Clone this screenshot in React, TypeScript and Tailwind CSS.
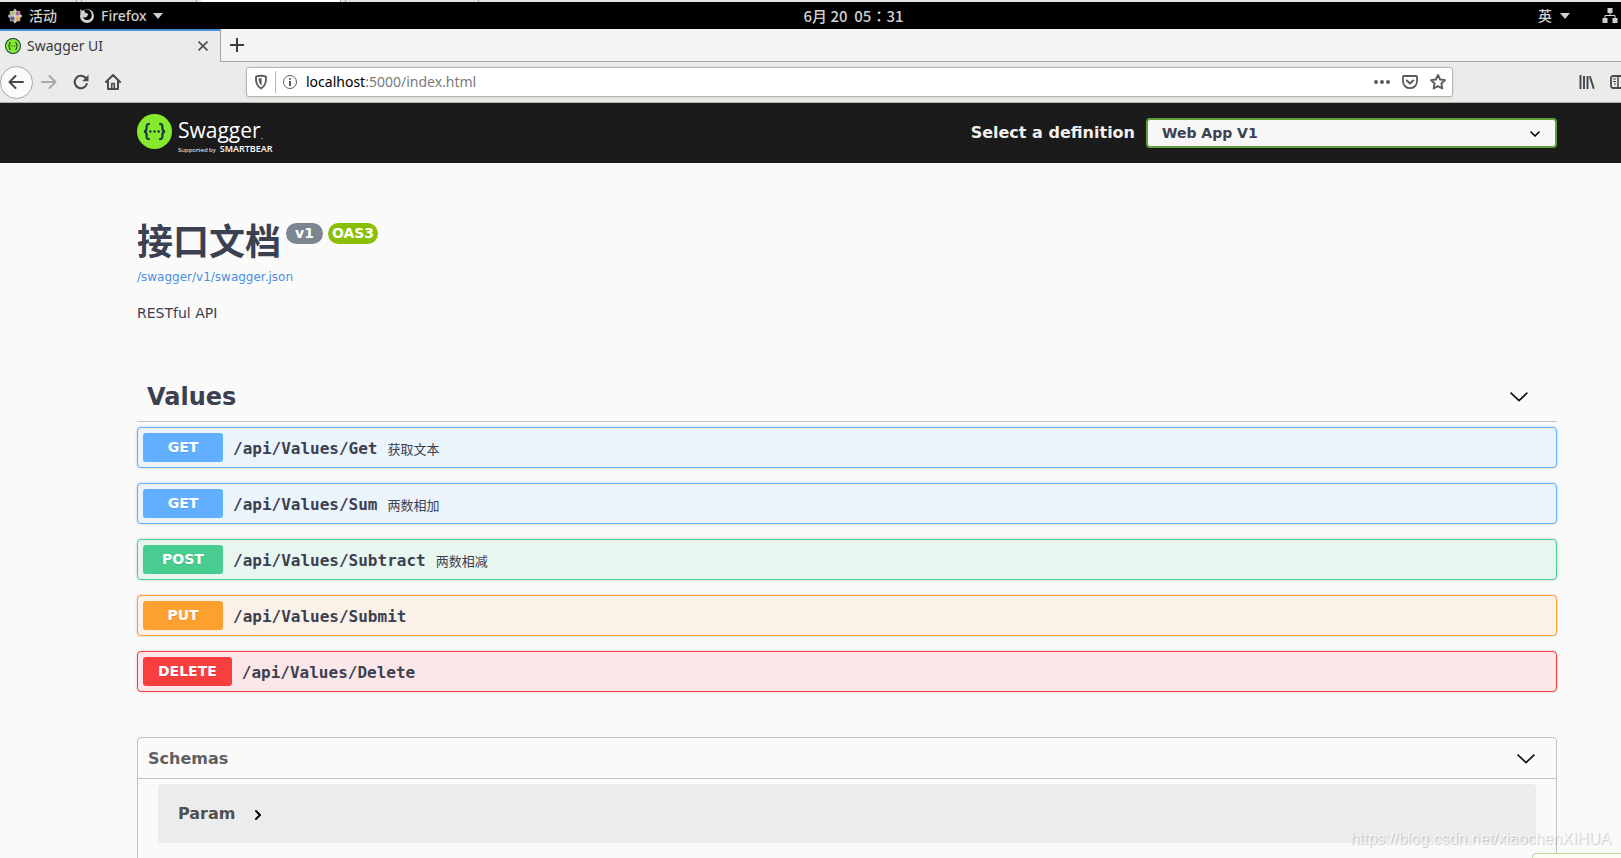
import { useId } from 'react'
import { ChevronDown, ChevronRight } from 'lucide-react'

// Linux desktop with a Firefox window that shows the Swagger UI of a web API.

type Method = 'GET' | 'POST' | 'PUT' | 'DELETE'

interface Operation {
  method: Method
  path: string
  summary?: string
}

const OPERATIONS: Operation[] = [
  { method: 'GET', path: '/api/Values/Get', summary: '获取文本' },
  { method: 'GET', path: '/api/Values/Sum', summary: '两数相加' },
  { method: 'POST', path: '/api/Values/Subtract', summary: '两数相减' },
  { method: 'PUT', path: '/api/Values/Submit' },
  { method: 'DELETE', path: '/api/Values/Delete' },
]

const BLOCK_CLASSES: Record<Method, string> = {
  GET: 'border-[#61affe] bg-[#ebf3fb]',
  POST: 'border-[#49cc90] bg-[#e8f6f0]',
  PUT: 'border-[#fca130] bg-[#fbf1e6]',
  DELETE: 'border-[#f93e3e] bg-[#fbe7e7]',
}

const BADGE_CLASSES: Record<Method, string> = {
  GET: 'bg-[#61affe]',
  POST: 'bg-[#49cc90]',
  PUT: 'bg-[#fca130]',
  DELETE: 'bg-[#f93e3e]',
}

const UI_FONT = "font-['Noto_Sans','Noto_Sans_CJK_SC',sans-serif]"

function ActivitiesIcon() {
  return (
    <svg viewBox="0 0 16 16" className="size-4" aria-hidden="true">
      <path d="M8 .5l2.200 2.500h3v3L15.500 8l-2.300 2.200v3h-3L8 15.500l-2.200-2.300h-3v-3L.5 8l2.300-2V3h3z" fill="#bdb6bd" />
      <path d="M3.500 3.500h4v4h-4z" fill="#a9c66a" />
      <path d="M8.500 3.500h4v4h-4z" fill="#a8629a" />
      <path d="M3.500 8.500h4v4h-4z" fill="#5a5a9c" />
      <path d="M8.500 8.500h4v4h-4z" fill="#e8b04a" />
      <path d="M8 1.500L6.500 4h3zM14.500 8L12 6.500v3zM8 14.500L6.500 12h3z" fill="#d9b45c" />
      <path d="M1.500 8L4 6.500v3z" fill="#7a6fae" />
      <path d="M8 2v12M2 8h12" stroke="#e6e2e6" strokeWidth=".8" />
    </svg>
  )
}

function FirefoxIcon() {
  return (
    <svg viewBox="0 0 16 16" className="size-4" aria-hidden="true">
      <circle cx="8" cy="8" r="7" fill="#d0d0d0" />
      <path d="M5 1.500C8 .8 11 2 12 4.500c1.600 3 .4 7-3.200 7.600-2.400.3-4.400-1-4.800-3 .9.600 2 .7 2.800.1L8.500 8 6.800 7.600l1.400-2-2-.5z" fill="#000" />
      <path d="M1.200 1l2.600 2.400L1.500 6z" fill="#d0d0d0" />
      <path d="M6.500 4.500l3 1.700-1.800 2.300-2.500-.8z" fill="#d0d0d0" />
    </svg>
  )
}

function NetworkIcon() {
  return (
    <svg viewBox="0 0 16 16" className="size-4 shrink-0" aria-hidden="true">
      <path d="M5.500 0h5v5h-5zM.5 10h5v5h-5zM10.500 10h5v5h-5z" fill="#d0d0d0" />
      <path d="M8 5v2.500M3 10V7.500h10V10" fill="none" stroke="#d0d0d0" />
    </svg>
  )
}

function SwaggerMark({ className, outlined }: { className: string; outlined?: boolean }) {
  return (
    <svg viewBox="0 0 35 35" className={className} aria-hidden="true">
      <circle cx="17.500" cy="17.500" r="17.500" fill={outlined ? '#173647' : '#85ea2d'} />
      {outlined && <circle cx="17.500" cy="17.500" r="15.500" fill="#85ea2d" />}
      <path
        d="M12.800 9.800c-2.600 0-3.200.7-3.200 2.700v1.700c0 1.900-.6 3.100-2.600 3.300 2 .2 2.600 1.400 2.600 3.300v1.700c0 2 .6 2.700 3.200 2.700M22.200 9.800c2.600 0 3.200.7 3.200 2.700v1.700c0 1.900.6 3.100 2.600 3.300-2 .2-2.600 1.400-2.600 3.300v1.700c0 2-.6 2.700-3.200 2.700"
        fill="none"
        stroke="#173647"
        strokeWidth="2.200"
      />
      <circle cx="13.300" cy="17.500" r="1.300" fill="#173647" />
      <circle cx="17.500" cy="17.500" r="1.300" fill="#173647" />
      <circle cx="21.700" cy="17.500" r="1.300" fill="#173647" />
    </svg>
  )
}

function BackIcon() {
  return (
    <svg viewBox="0 0 16 16" className="size-4" fill="none" stroke="currentColor" strokeWidth="2" strokeLinecap="round" strokeLinejoin="round" aria-hidden="true">
      <path d="M15 8H1.500M7.500 2l-6 6 6 6" />
    </svg>
  )
}

function ForwardIcon() {
  return (
    <svg viewBox="0 0 16 16" className="size-4" fill="none" stroke="currentColor" strokeWidth="2" strokeLinecap="round" strokeLinejoin="round" aria-hidden="true">
      <path d="M1 8h13.500M8.500 2l6 6-6 6" />
    </svg>
  )
}

function ReloadIcon() {
  return (
    <svg viewBox="0 0 16 16" className="size-4" aria-hidden="true">
      <path d="M13.800 10A6.200 6.200 0 1 1 12.300 3.600" fill="none" stroke="currentColor" strokeWidth="2.100" strokeLinecap="round" />
      <path d="M15.500.8v6.400H9.100z" fill="currentColor" />
    </svg>
  )
}

function HomeIcon() {
  return (
    <svg viewBox="0 0 16 16" className="size-4" fill="none" stroke="currentColor" strokeWidth="2" strokeLinecap="round" strokeLinejoin="round" aria-hidden="true">
      <path d="M1 8l7-7 7 7M3 7.500V15h10V7.500" />
      <path d="M6.700 15V9.500h2.600V15" strokeWidth="1.600" />
    </svg>
  )
}

function ShieldIcon() {
  return (
    <svg viewBox="0 0 16 16" className="size-4" aria-hidden="true">
      <path d="M8 1.800c2 0 3.600.3 5 .8.300 4.600-.6 9.500-5 11.900-4.400-2.400-5.300-7.300-5-11.900 1.400-.5 3-.8 5-.8z" fill="none" stroke="currentColor" strokeWidth="1.900" strokeLinejoin="round" />
      <path d="M8.600 4.300v7.400C6.200 9.800 5.500 7.300 5.500 4.600c1-.2 2-.3 3.100-.3z" fill="currentColor" />
    </svg>
  )
}

function InfoIcon() {
  return (
    <svg viewBox="0 0 16 16" className="size-4" aria-hidden="true">
      <circle cx="8" cy="8" r="6.500" fill="none" stroke="currentColor" />
      <circle cx="8" cy="5" r="1.100" fill="currentColor" />
      <path d="M7 7h2v5H7z" fill="currentColor" />
    </svg>
  )
}

function DotsIcon() {
  return (
    <svg viewBox="0 0 16 16" className="size-4" fill="currentColor" aria-hidden="true">
      <circle cx="2" cy="8" r="2" />
      <circle cx="8" cy="8" r="2" />
      <circle cx="14" cy="8" r="2" />
    </svg>
  )
}

function PocketIcon() {
  return (
    <svg viewBox="0 0 16 16" className="size-4" fill="none" stroke="currentColor" strokeWidth="2" strokeLinecap="round" strokeLinejoin="round" aria-hidden="true">
      <path d="M1.800 2h12.400c.5 0 .8.300.8.800V7.500a7 6.700 0 0 1-14 0V2.800c0-.5.300-.8.800-.8z" strokeWidth="1.800" />
      <path d="M4.800 6.500L8 9.500l3.200-3" />
    </svg>
  )
}

function StarIcon() {
  return (
    <svg viewBox="0 0 16 16" className="size-4" fill="none" stroke="currentColor" strokeWidth="1.900" strokeLinejoin="round" aria-hidden="true">
      <path d="M8 1l2.100 4.500 4.900.6-3.600 3.400.9 5L8 12.100l-4.300 2.400.9-5L1 6.100l4.900-.6z" />
    </svg>
  )
}

function LibraryIcon() {
  return (
    <svg viewBox="0 0 16 16" className="size-4" fill="none" stroke="currentColor" strokeWidth="2" aria-hidden="true">
      <path d="M1.500 1v14M5 2v13M8.500 2v13M10.800 2.200l4 12.500" />
    </svg>
  )
}

function SidebarIcon() {
  return (
    <svg viewBox="0 0 16 16" className="size-4 shrink-0" fill="none" stroke="currentColor" aria-hidden="true">
      <rect x="1" y="2" width="14" height="12" rx="2" strokeWidth="1.800" />
      <path d="M8 2v12" strokeWidth="1.500" />
      <path d="M3 5h3M3 7.500h3M4 10h2" />
    </svg>
  )
}

function Caret() {
  return (
    <svg viewBox="0 0 10 6" className="h-[6px] w-[10px]" aria-hidden="true">
      <path d="M0 0h10L5 6z" fill="#d0d0d0" />
    </svg>
  )
}

function WideChevron() {
  return (
    <svg viewBox="0 0 18 10" className="h-[10px] w-[18px]" fill="none" stroke="#111" strokeWidth="1.700" aria-hidden="true">
      <path d="M.6.700L9 8.600 17.400.700" />
    </svg>
  )
}

function DesktopBar() {
  return (
    <header className={`grid h-[27px] shrink-0 grid-cols-[1fr_auto_1fr] items-center bg-black text-sm font-medium text-[#d0d0d0] ${UI_FONT}`}>
      <div className="flex items-center pl-[7px]">
        <button className="flex items-center gap-1.5">
          <ActivitiesIcon />
          <span>活动</span>
        </button>
        <button className="ml-[22px] flex items-center gap-1.5">
          <FirefoxIcon />
          <span>Firefox</span>
          <Caret />
        </button>
      </div>
      <time className="pl-[86px] font-['Noto_Sans_CJK_JP',sans-serif] text-[15px] leading-6 font-medium whitespace-pre">
        6月 20  05：31
      </time>
      <div className="flex items-center justify-end pr-[3px]">
        <button className="mr-8 flex items-center gap-2">
          <span>英</span>
          <Caret />
        </button>
        <NetworkIcon />
      </div>
    </header>
  )
}

function TabStrip() {
  return (
    <div className={`flex h-[33px] shrink-0 bg-[#f4f4f4] text-sm text-[#38383d] ${UI_FONT}`}>
      <div className="flex w-[221px] items-center gap-1.5 border-t-2 border-r border-t-[#4a90d9] border-r-[#a6a6a6] bg-[#ebebea] pr-3 pb-0.5 pl-[5px]">
        <SwaggerMark className="size-4" outlined />
        <span className="flex-1">Swagger UI</span>
        <button aria-label="Close tab">
          <svg viewBox="0 0 10 10" className="size-[10px]" fill="none" stroke="#4a4f52" strokeWidth="1.600" aria-hidden="true">
            <path d="M.5.500l9 9M9.500.500l-9 9" />
          </svg>
        </button>
      </div>
      <div className="flex flex-1 items-center border-b border-[#a6a6a6] pl-[9px]">
        <button aria-label="New tab">
          <svg viewBox="0 0 14 14" className="size-[14px]" fill="none" stroke="#3a3f42" strokeWidth="2" aria-hidden="true">
            <path d="M7 0v14M0 7h14" />
          </svg>
        </button>
      </div>
    </div>
  )
}

function NavToolbar() {
  return (
    <div className={`flex h-[41px] shrink-0 items-center overflow-hidden border-b border-[#b0b0ab] bg-[#ebebea] text-[#454b4e] ${UI_FONT}`}>
      <button aria-label="Back" className="flex size-[33px] shrink-0 items-center justify-center rounded-full border border-[#a6a6a6] bg-[#fbfbfb] pr-0.5">
        <BackIcon />
      </button>
      <div className="flex items-center gap-4 pl-2">
        <button aria-label="Forward" className="text-[#a6a8a9]">
          <ForwardIcon />
        </button>
        <button aria-label="Reload">
          <ReloadIcon />
        </button>
        <button aria-label="Home">
          <HomeIcon />
        </button>
      </div>
      <div className="ml-[125px] flex h-[30px] flex-1 items-center rounded-[3px] border border-[#b5b5b0] bg-white pr-1.5 pl-1.5 text-[#5c5c5c] shadow-[0_1px_3px_rgba(0,0,0,0.1)]">
        <ShieldIcon />
        <span className="ml-1.5 h-[22px] w-px bg-[#b8b8b8]" />
        <span className="ml-1.5">
          <InfoIcon />
        </span>
        <a href="#top" className="ml-2 flex-1 text-sm text-[#7a7a7a]">
          <span className="text-black">localhost</span>:5000/index.html
        </a>
        <div className="flex items-center gap-3">
          <button aria-label="Page actions">
            <DotsIcon />
          </button>
          <button aria-label="Save to Pocket">
            <PocketIcon />
          </button>
          <button aria-label="Bookmark this page">
            <StarIcon />
          </button>
        </div>
      </div>
      <div className="flex w-[168px] items-center justify-end gap-[15px]">
        <button aria-label="Library">
          <LibraryIcon />
        </button>
        <button aria-label="Sidebars" className="w-[11px] overflow-hidden">
          <SidebarIcon />
        </button>
      </div>
    </div>
  )
}

function TopBar() {
  const selectId = useId()
  return (
    <div className="flex h-[60px] shrink-0 items-center bg-[#1b1b1b] pr-16 pl-[137px]">
      <a href="#top" aria-label="Swagger" className="flex items-start gap-1.5 font-['Open_Sans',sans-serif] text-white">
        <SwaggerMark className="mt-0.5 size-[35px]" />
        <span className="flex flex-col pt-1">
          <span className="flex items-end text-[21px] leading-7">
            Swagger<span className="text-[8px] leading-4">.</span>
          </span>
          <span className="flex items-baseline gap-1 text-[6px] leading-[10px]">
            Supported by <b className="text-[9px] font-semibold">SMARTBEAR</b>
          </span>
        </span>
      </a>
      <label htmlFor={selectId} className="ml-auto pr-px font-bold text-[#f0f0f0]">
        Select a definition
      </label>
      <div className="relative ml-[10px] w-[411px]">
        <select
          id={selectId}
          className="block h-[30px] w-full appearance-none rounded-sm border-2 border-[#62a03f] bg-[#f7f7f7] pl-3.5 text-sm font-bold text-[#3b4151]"
        >
          <option>Web App V1</option>
        </select>
        <ChevronDown className="pointer-events-none absolute top-2 right-[14px] size-4 text-black" strokeWidth={2.5} aria-hidden="true" />
      </div>
    </div>
  )
}

function OperationRow({ op }: { op: Operation }) {
  return (
    <li>
      <button
        className={`flex w-full items-center rounded border p-[5px] text-left shadow-[0_0_3px_rgba(0,0,0,0.19)] ${BLOCK_CLASSES[op.method]}`}
      >
        <span
          className={`h-[29px] min-w-20 rounded-[3px] px-[15px] text-center text-sm leading-7 font-bold text-white [text-shadow:0_1px_0_rgba(0,0,0,0.1)] ${BADGE_CLASSES[op.method]}`}
        >
          {op.method}
        </span>
        <span className="px-[10px] pt-0.5 font-['DejaVu_Sans_Mono',monospace] text-base font-bold">{op.path}</span>
        {op.summary && (
          <span className="pt-0.5 font-['Noto_Sans_CJK_SC',sans-serif] text-[13px] leading-5">{op.summary}</span>
        )}
      </button>
    </li>
  )
}

function ApiInfo() {
  return (
    <section>
      <div className="flex items-start gap-[5px]">
        <h1 className="font-['Noto_Sans_CJK_SC',sans-serif] text-4xl leading-8 font-bold">接口文档</h1>
        <span className="rounded-full bg-[#7d8492] px-[9px] text-sm leading-[21px] font-bold text-white">v1</span>
        <span className="rounded-full bg-[#89bf04] px-1 text-sm leading-[21px] font-bold text-white">OAS3</span>
      </div>
      <a href="#swagger-json" className="mt-3.5 block w-fit text-xs text-[#4990e2]">
        /swagger/v1/swagger.json
      </a>
      <p className="mt-[18px] text-sm">RESTful API</p>
    </section>
  )
}

export default function App() {
  return (
    <div className="relative flex h-screen flex-col overflow-hidden bg-[#fafafa] font-['DejaVu_Sans','Noto_Sans_CJK_SC',sans-serif] text-[#3b4151]">
      {/* sliver of the host window above the desktop */}
      <div className="flex h-0.5 shrink-0 bg-[#e3e4e8]">
        <span className="w-[77px] border-r border-[#a6a6a6]" />
        <span className="w-[5px] border-r border-[#a6a6a6]" />
        <span className="w-[115px] border-r border-[#a6a6a6]" />
        <span className="ml-1 w-[140px] border-r border-[#a6a6a6] bg-white" />
        <span className="w-[5px] border-r border-[#a6a6a6]" />
        <span className="w-[133px] border-r border-[#a6a6a6]" />
      </div>
      <DesktopBar />
      <TabStrip />
      <NavToolbar />
      <TopBar />

      <main className="flex-1 overflow-hidden pt-[60px] pr-16 pl-[137px]">
        <ApiInfo />

        <section className="mt-[50px]">
          <h2>
            <button className="flex w-full items-center justify-between border-b border-[#3b4151]/30 pt-2 pr-[29px] pb-2 pl-[10px] text-2xl leading-8 font-bold">
              Values
              <WideChevron />
            </button>
          </h2>
          <ul className="mt-[5px] flex flex-col gap-[15px]">
            {OPERATIONS.map((op) => (
              <OperationRow key={op.path} op={op} />
            ))}
          </ul>
        </section>

        <section className="mt-[45px] rounded border border-[#3b4151]/30 pb-5">
          <h2>
            <button className="flex h-[41px] w-full items-center justify-between border-b border-[#3b4151]/30 pt-0.5 pr-[21px] pl-[10px] font-bold text-[#606060]">
              Schemas
              <WideChevron />
            </button>
          </h2>
          <div className="mx-5 mt-[5px] flex h-[59px] items-center rounded bg-[#ececec] px-5">
            <button className="flex items-center gap-[15px] font-bold text-[#505050]">
              Param
              <ChevronRight className="mt-0.5 size-4 text-black" strokeWidth={3} aria-hidden="true" />
            </button>
          </div>
        </section>
      </main>

      {/* page watermark and the notice that rises from the bottom edge */}
      <span className="absolute right-[10px] bottom-[7px] font-['Liberation_Sans',sans-serif] text-base leading-6 text-white/70 [text-shadow:1px_1px_1px_rgba(0,0,0,0.2)]">
        https://blog.csdn.net/xiaochenXIHUA
      </span>
      <div className="absolute right-0 bottom-0 h-[5px] w-[89px] rounded-tl-lg border-t border-l border-[#b5dd9b] bg-[#fdfdf5]" />
    </div>
  )
}
